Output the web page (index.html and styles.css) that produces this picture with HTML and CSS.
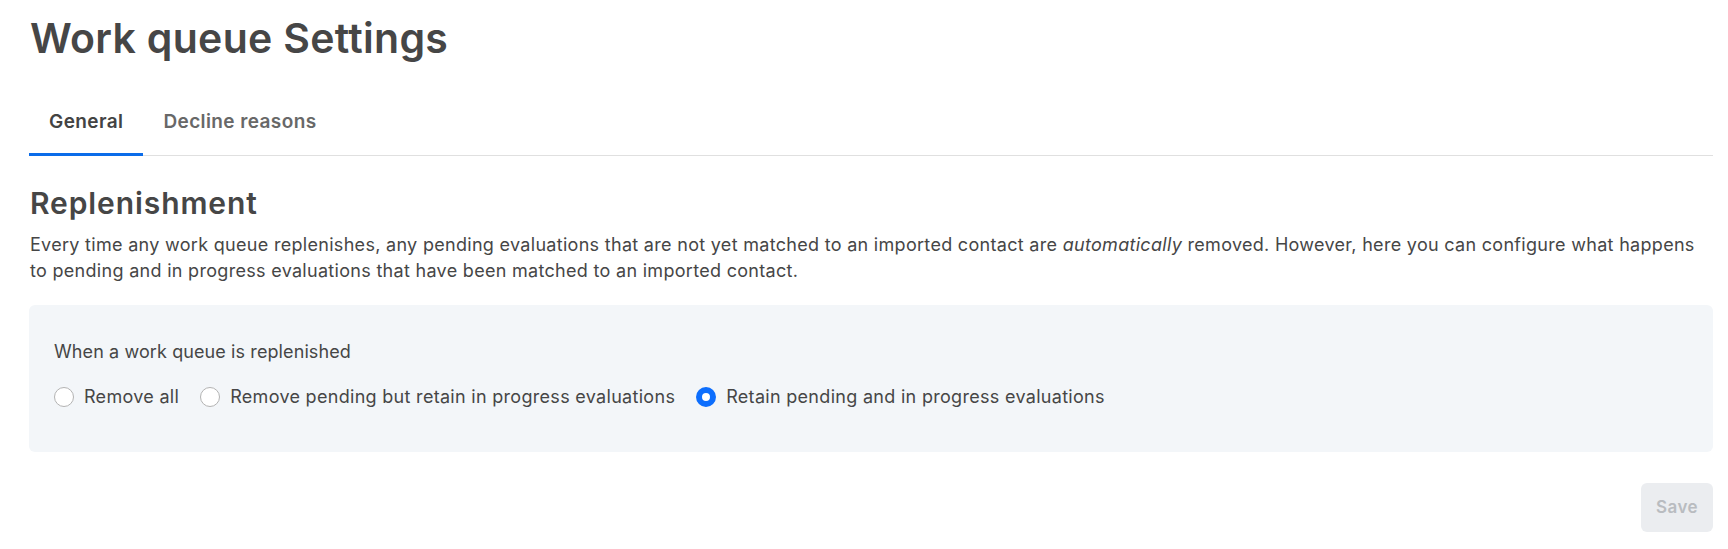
FILE: index.html
```html
<!DOCTYPE html>
<html lang="en">
<head>
<meta charset="utf-8">
<title>Work queue Settings</title>
<link rel="stylesheet" href="styles.css">
</head>
<body>
<main class="page">
  <h1 class="title">Work queue Settings</h1>
  <nav class="tabs">
    <a class="tab active">General</a>
    <a class="tab">Decline reasons</a>
  </nav>
  <section class="section">
    <h2 class="section-title">Replenishment</h2>
    <p class="desc">Every time any work queue replenishes, any pending evaluations that are not yet matched to an imported contact are <em>automatically</em> removed. However, here you can configure what happens to pending and in progress evaluations that have been matched to an imported contact.</p>
    <div class="panel">
      <div class="panel-label">When a work queue is replenished</div>
      <div class="options">
        <label class="option"><input type="radio" name="rep" class="radio"><span>Remove all</span></label>
        <label class="option"><input type="radio" name="rep" class="radio"><span>Remove pending but retain in progress evaluations</span></label>
        <label class="option"><input type="radio" name="rep" class="radio" checked><span>Retain pending and in progress evaluations</span></label>
      </div>
    </div>
    <div class="actions">
      <button class="btn-save" disabled>Save</button>
    </div>
  </section>
</main>
</body>
</html>
```

FILE: styles.css
```css
* { box-sizing: border-box; }
html, body { margin: 0; padding: 0; background: #ffffff; }
body {
  font-family: Inter, "Open Sans", "Liberation Sans", sans-serif;
  color: #464646;
}
.page { padding: 13px 15px 0 29px; }
.title {
  margin: 0 0 0 1px;
  font-size: 41px;
  line-height: 50px;
  font-weight: 600;
  color: #464646;
  letter-spacing: 0.3px;
}
.tabs {
  display: flex;
  margin-top: 47.4px;
  border-bottom: 1px solid #e0e0e0;
}
.tab {
  display: block;
  padding: 0 20px 18.6px;
  font-size: 19px;
  line-height: 24px;
  font-weight: 600;
  letter-spacing: 0.4px;
  color: #686868;
  border-bottom: 3px solid transparent;
  margin-bottom: -1px;
}
.tab.active { color: #434343; border-bottom-color: #0b6ce9; }
.section { padding-top: 29.4px; }
.section-title {
  margin: 0 0 0 1px;
  font-size: 30px;
  line-height: 36px;
  font-weight: 600;
  letter-spacing: 0.9px;
  color: #464646;
}
.desc {
  margin: 10.2px 0 0 1px;
  font-size: 18px;
  line-height: 26.4px;
  letter-spacing: 0.3px;
  color: #464646;
}
.desc em { font-style: italic; }
.panel {
  margin-top: 20.6px;
  background: #f3f6f9;
  border-radius: 6px;
  height: 147px;
  padding: 33.8px 25px 0 25px;
}
.panel-label { font-size: 18px; line-height: 26px; letter-spacing: 0.1px; color: #464646; }
.options { display: flex; align-items: center; gap: 21px; margin-top: 19.2px; }
.option {
  display: flex;
  align-items: center;
  gap: 10px;
  font-size: 18px;
  line-height: 26px;
  letter-spacing: 0.3px;
  color: #464646;
}
.radio {
  appearance: none;
  -webkit-appearance: none;
  margin: 0;
  width: 20px;
  height: 20px;
  border-radius: 50%;
  border: 1px solid #b3b3b3;
  background: #ffffff;
  flex: none;
}
.radio:checked { border: 6px solid #0d6efd; }
.actions { display: flex; justify-content: flex-end; margin-top: 31px; }
.btn-save {
  width: 72px;
  height: 49px;
  border: 0;
  border-radius: 6px;
  background: #ebedf0;
  color: #b9bcc0;
  font-family: inherit;
  font-size: 17px;
  font-weight: 600;
  letter-spacing: 0.4px;
}
```
